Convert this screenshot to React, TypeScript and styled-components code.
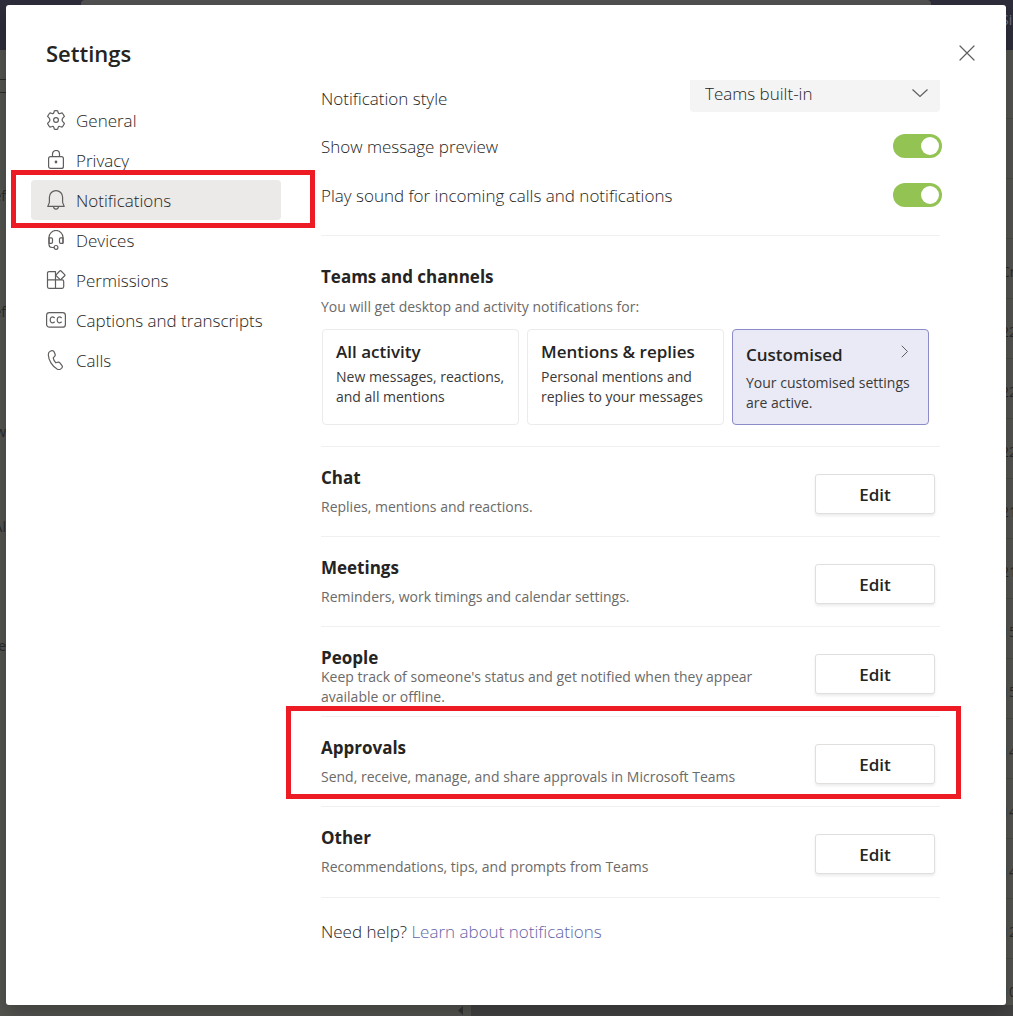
import React, { useState } from "react";
import styled, { createGlobalStyle, css } from "styled-components";

const GlobalStyle = createGlobalStyle`
  *, *::before, *::after { box-sizing: border-box; }
  body {
    margin: 0;
    font-family: "Open Sans", "Noto Sans", sans-serif;
    font-size: 17px;
    font-weight: 350;
    line-height: 20px;
    color: #252423;
    background: #545350;
  }
  button, select { font: inherit; color: inherit; }
  h1, h2, h3, p, ul { margin: 0; padding: 0; }
`;

const Page = styled.div`
  position: relative;
  display: flex;
  min-height: 100vh;
  padding: 5px 7px 11px 6px;
  overflow: hidden;
`;

/* Dimmed application behind the dialog */
const Backdrop = styled.div`
  position: absolute;
  inset: 0;
  display: flex;
  flex-direction: column;
  overflow: hidden;
  background: #545451;
  color: #2b2b2a;
  font-size: 14px;
  font-weight: 400;
`;

const AppBar = styled.div`
  display: flex;
  justify-content: space-between;
  flex: none;
  height: 50px;
  padding-left: 81px;
  background: #2e2d3b;
`;

const SearchBar = styled.div`
  width: 850px;
  height: 30px;
  border-radius: 4px;
  background: #525252;
`;

const AppBarText = styled.span`
  align-self: center;
  width: 12px;
  height: 20px;
  margin-bottom: 10px;
  overflow: hidden;
  color: #77767f;
`;

const AppBody = styled.div`
  display: flex;
  justify-content: space-between;
  flex: 1;
  min-height: 0;
`;

const LeftEdge = styled.div`
  display: flex;
  flex-direction: column;
  width: 6px;
  padding-top: 29px;
`;

const MenuGlyph = styled.div`
  height: 14px;
  flex: none;
  border-top: 1px solid #2b2b2a;
  border-bottom: 1px solid #2b2b2a;
`;

const LeftText = styled.div<{ $height: number }>`
  display: flex;
  flex: none;
  justify-content: flex-end;
  align-items: flex-end;
  height: ${(p) => p.$height}px;
  overflow: hidden;
`;

const RightEdge = styled.div`
  display: flex;
  flex-direction: column;
  width: 12px;
  padding-top: 68px;
`;

const RightCell = styled.div`
  display: flex;
  flex: none;
  align-items: center;
  height: 60px;
  padding-top: 6px;
  overflow: hidden;
  border-top: 1px solid #4a4a48;
`;

const BottomBar = styled.div`
  display: flex;
  flex: none;
  align-items: center;
  height: 11px;
  padding-left: 457px;
`;

const Thumb = styled.div`
  flex: 1;
  height: 11px;
  margin-left: 7px;
  background: #434343;
`;

const Dialog = styled.section`
  position: relative;
  display: flex;
  flex: 1;
  flex-direction: column;
  min-width: 0;
  padding: 35px 26px 40px 25px;
  border-radius: 3px;
  background: #fff;
  box-shadow: 0 8px 20px rgba(0, 0, 0, 0.25);
`;

const DialogHeader = styled.header`
  display: flex;
  align-items: flex-start;
  justify-content: space-between;
  height: 40px;
  padding-left: 15px;
`;

const Title = styled.h1`
  font-size: 22px;
  line-height: 26px;
  font-weight: 600;
`;

const CloseButton = styled.button`
  display: flex;
  align-items: center;
  justify-content: center;
  width: 26px;
  height: 26px;
  padding: 0;
  border: 0;
  background: none;
  cursor: pointer;
`;

const Columns = styled.div`
  display: grid;
  grid-template-columns: 250px minmax(0, 1fr);
  column-gap: 40px;
  padding-right: 40px;
`;

const NavList = styled.ul`
  padding-top: 20px;
  list-style: none;
`;

const NavItem = styled.li`
  position: relative;
`;

const NavButton = styled.button<{ $active: boolean }>`
  display: flex;
  align-items: center;
  gap: 10px;
  width: 100%;
  height: 40px;
  padding: 0 15px;
  border: 0;
  border-radius: 4px;
  background: ${(p) => (p.$active ? "#ebeae8" : "transparent")};
  text-align: left;
  white-space: nowrap;
  cursor: pointer;
`;

const NavLabel = styled.span`
  padding-top: 2px;
`;

const Highlight = styled.span<{ $area: "nav" | "row" }>`
  position: absolute;
  z-index: 1;
  border: 5px solid #ed1c24;
  pointer-events: none;
  ${(p) =>
    p.$area === "nav"
      ? css`
          inset: -10px -34px -8px -20px;
        `
      : css`
          inset: -11px -21px 7px -35px;
        `}
`;

const Content = styled.main`
  min-width: 0;
`;

const General = styled.div`
  display: flex;
  flex-direction: column;
  height: 156px;
  border-bottom: 1px solid #f0f0f0;
`;

const OptionRow = styled.div<{ $first?: boolean }>`
  display: flex;
  align-items: center;
  justify-content: space-between;
  height: ${(p) => (p.$first ? 38 : 49)}px;
  margin-bottom: ${(p) => (p.$first ? 4 : 0)}px;
`;

const SelectBox = styled.div`
  position: relative;
  align-self: flex-start;
  width: 250px;
`;

const Select = styled.select`
  width: 100%;
  height: 32px;
  padding: 0 40px 4px 15px;
  border: 0;
  border-radius: 0 0 4px 4px;
  background: #f4f4f4;
  appearance: none;
`;

const SelectChevron = styled.svg`
  position: absolute;
  top: 8px;
  right: 11px;
  pointer-events: none;
`;

const Switch = styled.input`
  display: flex;
  align-items: center;
  width: 49px;
  height: 24px;
  margin: 0 -2px 2px 0;
  padding: 0 3px;
  border-radius: 12px;
  background: #c8c6c4;
  appearance: none;
  cursor: pointer;

  &::before {
    content: "";
    width: 18px;
    height: 18px;
    border-radius: 50%;
    background: #fff;
  }

  &:checked {
    justify-content: flex-end;
    background: #92c353;
  }
`;

const Channels = styled.div`
  height: 211px;
  padding-top: 31px;
  border-bottom: 1px solid #f0f0f0;
`;

const Heading = styled.h2`
  font-size: 17px;
  line-height: 20px;
  font-weight: 700;
`;

const Hint = styled.p`
  padding: 10px 0 12px;
  font-size: 14px;
  font-weight: 400;
  line-height: 20px;
  color: #6b6a68;
`;

const Cards = styled.div`
  display: grid;
  grid-template-columns: repeat(3, minmax(0, 197px));
  gap: 8px;
  padding-left: 1px;
`;

const Card = styled.button<{ $active?: boolean }>`
  display: flex;
  flex-direction: column;
  height: 96px;
  gap: ${(p) => (p.$active ? 8 : 5)}px;
  padding: ${(p) => (p.$active ? 15 : 12)}px 15px 0 13px;
  border: 1px solid ${(p) => (p.$active ? "#8b8cc7" : "#edebe9")};
  border-radius: 4px;
  background: ${(p) => (p.$active ? "#e9eaf6" : "#fff")};
  text-align: left;
  cursor: pointer;
`;

const CardTitle = styled.span`
  display: flex;
  justify-content: space-between;
  width: 100%;
  font-weight: 550;
`;

const CardText = styled.span`
  font-size: 14px;
  font-weight: 400;
  line-height: 20px;
  color: #3b3a39;
  white-space: nowrap;
`;

const SettingRow = styled.section`
  position: relative;
  display: flex;
  align-items: flex-start;
  justify-content: space-between;
  height: 90px;
  padding: 21px 5px 0 0;
  border-bottom: 1px solid #f0f0f0;

  &:last-of-type {
    height: 91px;
  }
`;

const SettingText = styled.div`
  max-width: 460px;
`;

const SettingDescription = styled.p`
  display: flex;
  align-items: center;
  min-height: 40px;
  margin-top: -1px;
  font-size: 14px;
  font-weight: 400;
  line-height: 20px;
  color: #6b6a68;
`;

const EditButton = styled.button`
  width: 120px;
  height: 40px;
  padding: 2px 0 0;
  margin-top: 6px;
  border: 1px solid #e1dfdd;
  border-radius: 3px;
  background: #fff;
  box-shadow: 0 2px 3px rgba(0, 0, 0, 0.08);
  font-weight: 550;
  cursor: pointer;
`;

const Help = styled.p`
  padding-top: 24px;
`;

const HelpLink = styled.a`
  color: #6264a7;
  text-decoration: none;
`;

const IconSvg = styled.svg`
  flex: none;
  fill: none;
  stroke: #605e5c;
  stroke-width: 1.2;
  stroke-linecap: round;
  stroke-linejoin: round;
`;

const icons: Record<string, React.ReactNode> = {
  General: (
    <>
      <circle cx="10" cy="10" r="2.4" />
      <path d="M8.3 .9 Q10 .4 11.7 .9 L12.2 2.8 Q12.7 4 14 3.5 L16 2.9 Q17.5 4.4 18.4 6.4 L17 7.9 Q15.2 10 17 11.9 L18.4 13.4 Q17.5 15.6 16 17.1 L14 16.5 Q12.7 16 12.2 17.2 L11.7 19.1 Q10 19.6 8.3 19.1 L7.8 17.2 Q7.3 16 6 16.5 L4 17.1 Q2.5 15.6 1.6 13.4 L3 11.9 Q4.8 10 3 7.9 L1.6 6.4 Q2.5 4.4 4 2.9 L6 3.5 Q7.3 4 7.8 2.8 Z" />
    </>
  ),
  Privacy: (
    <>
      <rect x="2.6" y="6.6" width="14.8" height="11.8" rx="2" />
      <path d="M6.5 6.5 V4 a3.5 3.5 0 0 1 7 0 V6.5" />
      <circle cx="10" cy="12" r=".8" fill="#605e5c" />
    </>
  ),
  Notifications: (
    <>
      <path d="M3.4 12.4 V7.2 a6.6 6.6 0 0 1 13.2 0 V12.4 L18.2 16.4 H1.8 Z" />
      <path d="M7.5 16.6 a2.5 2.5 0 0 0 5 0" />
    </>
  ),
  Devices: (
    <>
      <path d="M3 12.5 V7.5 a7 7 0 0 1 14 0 V12.5" />
      <path d="M3 7.8 H5.2 a1.3 1.3 0 0 1 1.3 1.3 V12 a1.3 1.3 0 0 1 -1.3 1.3 H3 Z M17 7.8 H14.8 a1.3 1.3 0 0 0 -1.3 1.3 V12 a1.3 1.3 0 0 0 1.3 1.3 H17 Z" />
      <path d="M3 13.3 V14.5 Q3 17.5 6 17.5 H8" />
      <circle cx="10" cy="17.4" r="1.9" />
    </>
  ),
  Permissions: (
    <>
      <path d="M9.5 1.6 H3 a1.5 1.5 0 0 0 -1.5 1.5 V16.8 a1.5 1.5 0 0 0 1.5 1.5 H16.2 a1.5 1.5 0 0 0 1.5 -1.5 V11.4 a1.5 1.5 0 0 0 -1.5 -1.5 H1.5 M9.5 1.6 V18.3" />
      <path d="M10.3 4.6 L13.7 1 Q14.4 .4 15.1 1 L18.7 4.6 Q19.2 5.2 18.7 5.8 L15.1 9.2 Q14.4 9.8 13.7 9.2 L10.3 5.8 Q9.8 5.2 10.3 4.6 Z" />
    </>
  ),
  "Captions and transcripts": (
    <>
      <rect x=".6" y="2.6" width="18.8" height="14.6" rx="2.8" />
      <path d="M8.4 7.7 C5.8 5.8 4.2 7.7 4.2 9.9 C4.2 12.1 5.8 14 8.4 12.1 M15.4 7.7 C12.8 5.8 11.2 7.7 11.2 9.9 C11.2 12.1 12.8 14 15.4 12.1" />
    </>
  ),
  Calls: (
    <path d="M4.2 1.3 L5.7 .7 Q7.4 .3 8.1 1.8 L9.1 4.3 Q9.5 5.5 8.6 6.4 L7.2 7.8 Q7.6 10.5 9.9 12.8 L11.8 12.2 Q13.1 11.9 13.9 12.9 L16 15.6 Q16.8 16.8 15.9 17.9 L14.8 18.9 Q13.4 20 11.4 19.2 C6.5 16.8 2.5 10.3 2.3 4.8 Q2.3 2.1 4.2 1.3 Z" />
  ),
};

const settings = [
  { name: "Chat", text: "Replies, mentions and reactions." },
  { name: "Meetings", text: "Reminders, work timings and calendar settings." },
  {
    name: "People",
    text: "Keep track of someone's status and get notified when they appear available or offline.",
  },
  {
    name: "Approvals",
    text: "Send, receive, manage, and share approvals in Microsoft Teams",
    marked: true,
  },
  { name: "Other", text: "Recommendations, tips, and prompts from Teams" },
];

const leftFragments = [
  { text: "Ref", height: 113 },
  { text: "Ref", height: 116 },
  { text: "w", height: 120 },
  { text: "Al", height: 95 },
  { text: "te", height: 119 },
];

const rightFragments = ["", "", "Cr", "22", "22", "22", "21", "21", "15", "15", "14", "14", "14", "12", "10"];

function BackgroundApp() {
  return (
    <Backdrop aria-hidden="true">
      <AppBar>
        <SearchBar />
        <AppBarText>Sin</AppBarText>
      </AppBar>
      <AppBody>
        <LeftEdge>
          <MenuGlyph />
          {leftFragments.map((f, i) => (
            <LeftText key={i} $height={f.height}>
              {f.text}
            </LeftText>
          ))}
        </LeftEdge>
        <RightEdge>
          {rightFragments.map((t, i) => (
            <RightCell key={i}>{t}</RightCell>
          ))}
        </RightEdge>
      </AppBody>
      <BottomBar>
        <svg width="7" height="9" viewBox="0 0 7 9">
          <path d="M6 0 L1 4.5 L6 9 Z" fill="#333" />
        </svg>
        <Thumb />
      </BottomBar>
    </Backdrop>
  );
}

export default function App() {
  const [active, setActive] = useState("Notifications");
  const [preview, setPreview] = useState(true);
  const [sound, setSound] = useState(true);

  return (
    <>
      <GlobalStyle />
      <Page>
        <BackgroundApp />
        <Dialog role="dialog" aria-labelledby="settings-title">
          <DialogHeader>
            <Title id="settings-title">Settings</Title>
            <CloseButton aria-label="Close">
              <IconSvg width="16" height="16" viewBox="0 0 16 16">
                <path d="M1 1 L15 15 M15 1 L1 15" />
              </IconSvg>
            </CloseButton>
          </DialogHeader>
          <Columns>
            <nav aria-label="Settings sections">
              <NavList>
                {Object.keys(icons).map((name) => (
                  <NavItem key={name}>
                    <NavButton $active={active === name} onClick={() => setActive(name)}>
                      <IconSvg width="20" height="20" viewBox="0 0 20 20">
                        {icons[name]}
                      </IconSvg>
                      <NavLabel>{name}</NavLabel>
                    </NavButton>
                    {name === "Notifications" && <Highlight $area="nav" />}
                  </NavItem>
                ))}
              </NavList>
            </nav>
            <Content>
              <General>
                <OptionRow $first>
                  <label htmlFor="style">Notification style</label>
                  <SelectBox>
                    <Select id="style" defaultValue="Teams built-in">
                      <option>Teams built-in</option>
                      <option>Windows</option>
                    </Select>
                    <SelectChevron width="18" height="10" viewBox="0 0 18 10">
                      <path d="M1.5 1.5 L9 8.5 L16.5 1.5" fill="none" stroke="#605e5c" strokeWidth="1.2" />
                    </SelectChevron>
                  </SelectBox>
                </OptionRow>
                <OptionRow>
                  <label htmlFor="preview">Show message preview</label>
                  <Switch
                    id="preview"
                    type="checkbox"
                    checked={preview}
                    onChange={(e) => setPreview(e.target.checked)}
                  />
                </OptionRow>
                <OptionRow>
                  <label htmlFor="sound">Play sound for incoming calls and notifications</label>
                  <Switch
                    id="sound"
                    type="checkbox"
                    checked={sound}
                    onChange={(e) => setSound(e.target.checked)}
                  />
                </OptionRow>
              </General>
              <Channels>
                <Heading>Teams and channels</Heading>
                <Hint>You will get desktop and activity notifications for:</Hint>
                <Cards>
                  <Card>
                    <CardTitle>All activity</CardTitle>
                    <CardText>
                      New messages, reactions,
                      <br />
                      and all mentions
                    </CardText>
                  </Card>
                  <Card>
                    <CardTitle>Mentions &amp; replies</CardTitle>
                    <CardText>
                      Personal mentions and
                      <br />
                      replies to your messages
                    </CardText>
                  </Card>
                  <Card $active>
                    <CardTitle>
                      Customised
                      <IconSvg width="16" height="14" viewBox="0 0 16 14">
                        <path d="M5 1 L10.5 6.5 L5 12" strokeWidth="1" />
                      </IconSvg>
                    </CardTitle>
                    <CardText>
                      Your customised settings
                      <br />
                      are active.
                    </CardText>
                  </Card>
                </Cards>
              </Channels>
              {settings.map((s) => (
                <SettingRow key={s.name}>
                  <SettingText>
                    <Heading>{s.name}</Heading>
                    <SettingDescription>{s.text}</SettingDescription>
                  </SettingText>
                  <EditButton aria-label={`Edit ${s.name}`}>Edit</EditButton>
                  {s.marked && <Highlight $area="row" />}
                </SettingRow>
              ))}
              <Help>
                Need help? <HelpLink href="#notifications">Learn about notifications</HelpLink>
              </Help>
            </Content>
          </Columns>
        </Dialog>
      </Page>
    </>
  );
}
